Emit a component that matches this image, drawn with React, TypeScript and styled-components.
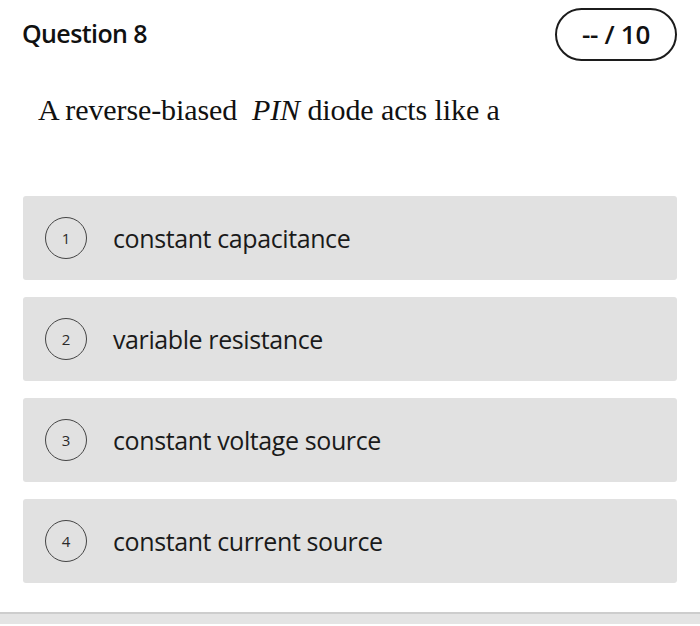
import styled, { createGlobalStyle } from 'styled-components';

const GlobalStyle = createGlobalStyle`
  html, body {
    margin: 0;
    padding: 0;
    background: #ffffff;
  }
  body {
    font-family: 'Open Sans', 'Liberation Sans', sans-serif;
    color: #1a1a1a;
  }
`;

const Page = styled.div`
  width: 700px;
  height: 626px;
  display: flex;
  flex-direction: column;
  overflow: hidden;
`;

const Header = styled.div`
  display: flex;
  justify-content: space-between;
  align-items: center;
  padding: 8px 23px 0 22px;
  height: 52px;
`;

const Title = styled.h2`
  margin: 0;
  margin-top: -2px;
  font-size: 25px;
  font-weight: 550;
  letter-spacing: -0.6px;
  color: #111;
`;

const ScoreBadge = styled.div`
  box-sizing: border-box;
  width: 122px;
  height: 53px;
  border: 2px solid #1c1c1c;
  border-radius: 27px;
  display: flex;
  align-items: center;
  justify-content: center;
  font-size: 26px;
  font-weight: 550;
  letter-spacing: -0.3px;
  color: #111;
`;

const Prompt = styled.p`
  margin: 30px 0 0 38px;
  font-family: 'Liberation Serif', 'Times New Roman', serif;
  font-size: 30px;
  line-height: 40px;
  color: #111;
  letter-spacing: -0.1px;
  white-space: pre;

  em {
    font-style: italic;
  }
`;

const Options = styled.div`
  display: flex;
  flex-direction: column;
  gap: 17px;
  margin: 66px 23px 0 23px;
`;

const Option = styled.div`
  height: 84px;
  background: #e1e1e1;
  border-radius: 3px;
  display: flex;
  align-items: center;
  padding-left: 22px;
  gap: 26px;
`;

const Badge = styled.span`
  box-sizing: border-box;
  width: 42px;
  height: 42px;
  border: 1.6px solid #444;
  border-radius: 50%;
  display: flex;
  align-items: center;
  justify-content: center;
  font-size: 15px;
  color: #2a2a2a;
  flex-shrink: 0;
`;

const Label = styled.span`
  font-size: 25px;
  color: #1a1a1a;
  letter-spacing: -0.4px;
`;

const Footer = styled.div`
  margin-top: auto;
  margin-bottom: 2px;
  height: 10px;
  border-top: 2px solid #cdcdcd;
  background: #e4e4e4;
`;

const choices = [
  'constant capacitance',
  'variable resistance',
  'constant voltage source',
  'constant current source',
];

const App = () => {
  return (
    <Page>
      <GlobalStyle />
      <Header>
        <Title>Question 8</Title>
        <ScoreBadge>-- / 10</ScoreBadge>
      </Header>
      <Prompt>
        A reverse-biased  <em>PIN</em> diode acts like a
      </Prompt>
      <Options>
        {choices.map((c, i) => (
          <Option key={c}>
            <Badge>{i + 1}</Badge>
            <Label>{c}</Label>
          </Option>
        ))}
      </Options>
      <Footer />
    </Page>
  );
};

export default App;
